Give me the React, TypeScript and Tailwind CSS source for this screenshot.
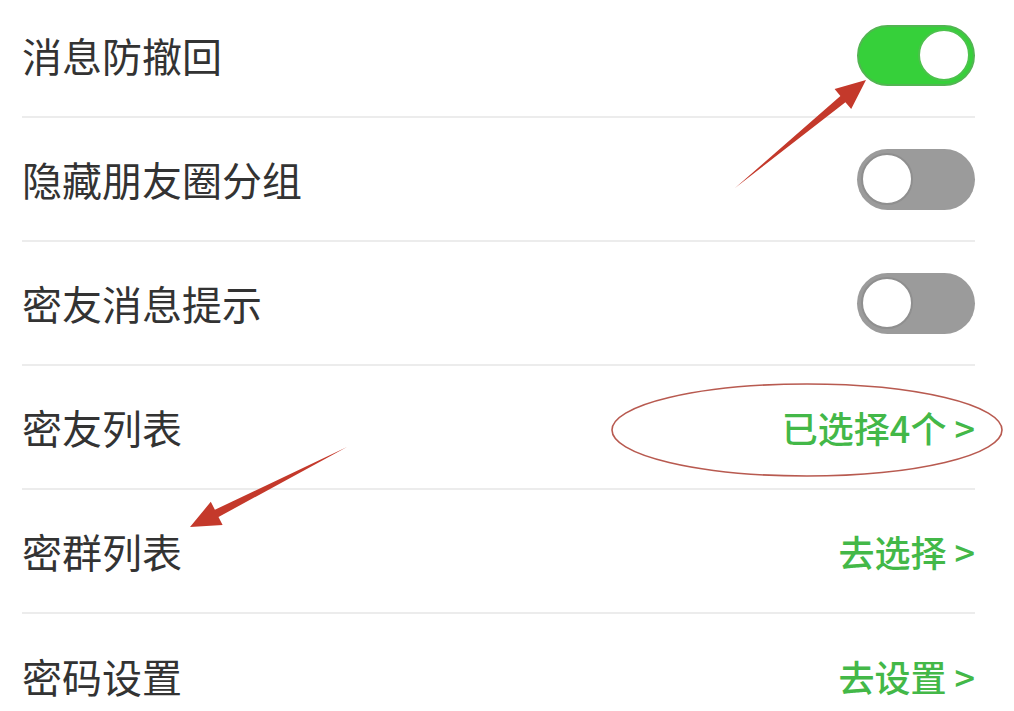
import React from "react";

type Row = {
  label: string;
  toggle?: boolean;
  on?: boolean;
  value?: string;
};

const rows: Row[] = [
  { label: "消息防撤回", toggle: true, on: true },
  { label: "隐藏朋友圈分组", toggle: true, on: false },
  { label: "密友消息提示", toggle: true, on: false },
  { label: "密友列表", value: "已选择4个 >" },
  { label: "密群列表", value: "去选择 >" },
  { label: "密码设置", value: "去设置 >" },
];

function Toggle({ on }: { on: boolean }) {
  if (on) {
    return (
      <div className="w-[118px] h-[61px] rounded-full bg-[#36d03a] border-2 border-[#52b552] flex items-center justify-end pr-[3px]">
        <div className="w-[52px] h-[52px] rounded-full bg-white border-2 border-[#4cc24c]" />
      </div>
    );
  }
  return (
    <div className="w-[118px] h-[61px] rounded-full bg-[#9b9b9b] flex items-center justify-start pl-[4px]">
      <div className="w-[52px] h-[52px] rounded-full bg-white border-2 border-[#8f8f8f]" />
    </div>
  );
}

export default function App() {
  return (
    <div
      className="relative w-[1014px] h-[711px] overflow-hidden bg-white"
      style={{ fontFamily: '"Noto Sans CJK SC", "Noto Sans", sans-serif' }}
    >
      <div className="flex flex-col mt-[-6px] ml-[22px] mr-[39px]">
        {rows.map((r, i) => (
          <div
            key={r.label}
            className={`h-[124px] flex items-center justify-between ${
              i < rows.length - 1 ? "border-b-2 border-[#ececec]" : ""
            }`}
          >
            <span className="text-[40px] leading-none text-[#333333]">{r.label}</span>
            {r.toggle ? (
              <Toggle on={!!r.on} />
            ) : (
              <span className="text-[36px] leading-none font-medium text-[#43b848]">{r.value}</span>
            )}
          </div>
        ))}
      </div>

      {/* annotations drawn over the screenshot */}
      <svg
        className="absolute inset-0 pointer-events-none"
        width="1014"
        height="711"
        viewBox="0 0 1014 711"
      >
        <ellipse cx="807" cy="430" rx="195" ry="46" fill="none" stroke="#b85a50" strokeWidth="1.6" />
        <polygon
          points="735,188 840.4,96 834.6,89.1 866,80 851.2,109.1 845.4,102.2"
          fill="#c4392b"
        />
        <polygon
          points="347,447 214.9,509.8 210.8,501.8 190,527 222.6,525 218.5,517"
          fill="#c4392b"
        />
      </svg>
    </div>
  );
}
